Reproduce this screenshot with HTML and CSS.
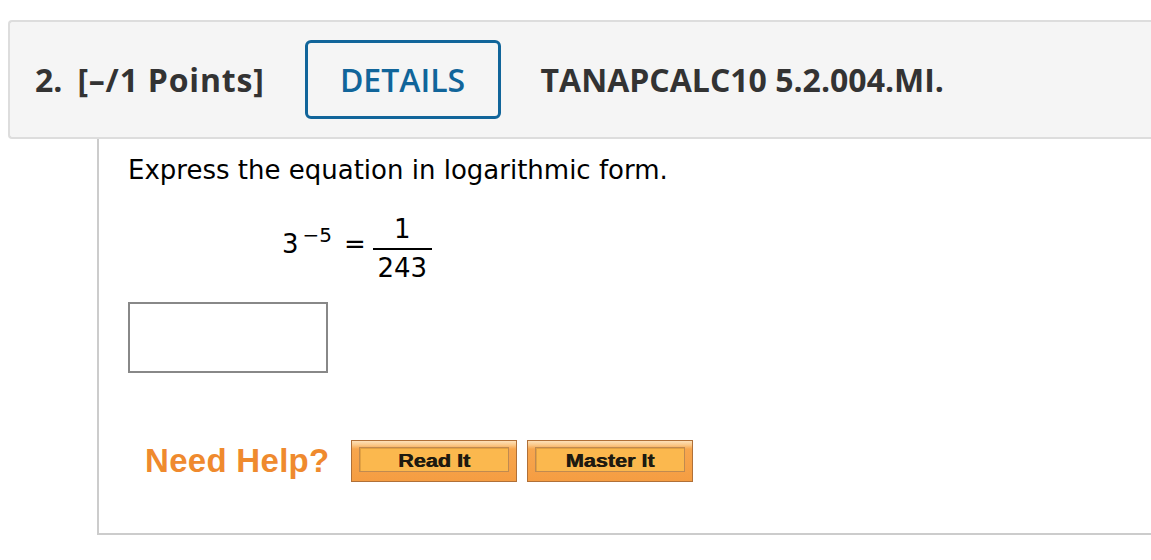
FILE: index.html
```html
<!DOCTYPE html>
<html>
<head>
<meta charset="utf-8">
<link rel="stylesheet" href="styles.css">
</head>
<body>
<div class="question">
  <div class="q-header">
    <span class="q-num">2.</span>
    <span class="q-points">[–/1 Points]</span>
    <span class="details-btn">DETAILS</span>
    <span class="q-code">TANAPCALC10 5.2.004.MI.</span>
  </div>
  <div class="q-body">
    <p class="prompt">Express the equation in logarithmic form.</p>
    <div class="equation">
      <span class="base">3<span class="exp">−5</span></span>
      <span class="eq">=</span>
      <span class="frac"><span class="num">1</span><span class="den">243</span></span>
    </div>
    <div class="answer"></div>
    <div class="help-row">
      <span class="need-help">Need Help?</span>
      <span class="help-btn"><span class="help-inner"><span class="help-label">Read It</span></span></span>
      <span class="help-btn"><span class="help-inner"><span class="help-label">Master It</span></span></span>
    </div>
  </div>
</div>
</body>
</html>
```

FILE: styles.css
```css
html, body {
  margin: 0;
  padding: 0;
  background: #ffffff;
}
.question {
  margin: 20px 0 0 8px;
}
.q-header {
  display: flex;
  align-items: center;
  height: 115px;
  background: #f5f5f5;
  border: 2px solid #dddddd;
  border-right: none;
  border-radius: 4px 0 0 4px;
  padding-left: 25px;
  font-family: "Open Sans", "DejaVu Sans", sans-serif;
  font-weight: 700;
  font-size: 32px;
  color: #333333;
}
.q-num {
  margin-right: 15px;
}
.q-points {
  margin-right: 40px;
  letter-spacing: 0.8px;
}
.details-btn {
  display: flex;
  align-items: center;
  justify-content: center;
  box-sizing: border-box;
  width: 196px;
  height: 79px;
  border: 3px solid #11659a;
  border-radius: 6px;
  color: #11659a;
  font-weight: 600;
  font-size: 32px;
  margin-right: 40px;
}
.q-body {
  margin-left: 89px;
  border-left: 2px solid #cccccc;
  border-bottom: 2px solid #cccccc;
  height: 394px;
  padding-left: 29px;
  font-family: "DejaVu Sans", Verdana, sans-serif;
  color: #000000;
}
.prompt {
  margin: 0;
  padding-top: 15px;
  font-size: 26px;
  line-height: 32px;
}
.equation {
  display: flex;
  align-items: flex-start;
  margin: 28px 0 0 154px;
  font-size: 26px;
  line-height: 30px;
}
.base {
  margin-top: 15px;
}
.exp {
  font-size: 20px;
  margin-left: 4px;
  position: relative;
  top: -11px;
}
.eq {
  margin: 15px 7px 0 12px;
}
.frac {
  display: flex;
  flex-direction: column;
  align-items: center;
}
.num {
  border-bottom: 2px solid #000000;
  padding-bottom: 4px;
  width: 59px;
  text-align: center;
}
.den {
  padding-top: 3px;
}
.answer {
  box-sizing: border-box;
  width: 200px;
  height: 71px;
  border: 2px solid #888888;
  margin-top: 19px;
}
.help-row {
  display: flex;
  align-items: center;
  margin-top: 67px;
  margin-left: 17px;
}
.need-help {
  font-family: "Liberation Sans", Arial, sans-serif;
  font-weight: 700;
  font-size: 33px;
  color: #ef8a2e;
  margin-right: 21px;
  letter-spacing: 0.3px;
}
.help-btn {
  display: flex;
  box-sizing: border-box;
  width: 166px;
  height: 42px;
  border: 1px solid #b07038;
  background: linear-gradient(#fde0b8 0%, #fbc98a 10%, #f7a64e 20%, #f59d42 100%);
  padding: 6px 7px 9px 7px;
  margin-right: 10px;
}
.help-inner {
  flex: 1;
  display: flex;
  align-items: center;
  justify-content: center;
  padding-top: 3px;
  border: 1px solid #c08a50;
  box-shadow: inset 1px 1px 0 rgba(150, 90, 30, 0.25);
  background: #fbb84e;
}
.help-label {
  font-family: "Liberation Sans", Arial, sans-serif;
  font-weight: 700;
  font-size: 18px;
  color: #1e1a10;
  text-shadow: 0.5px 0 0 #1e1a10;
  transform: scaleX(1.2);
}
```
